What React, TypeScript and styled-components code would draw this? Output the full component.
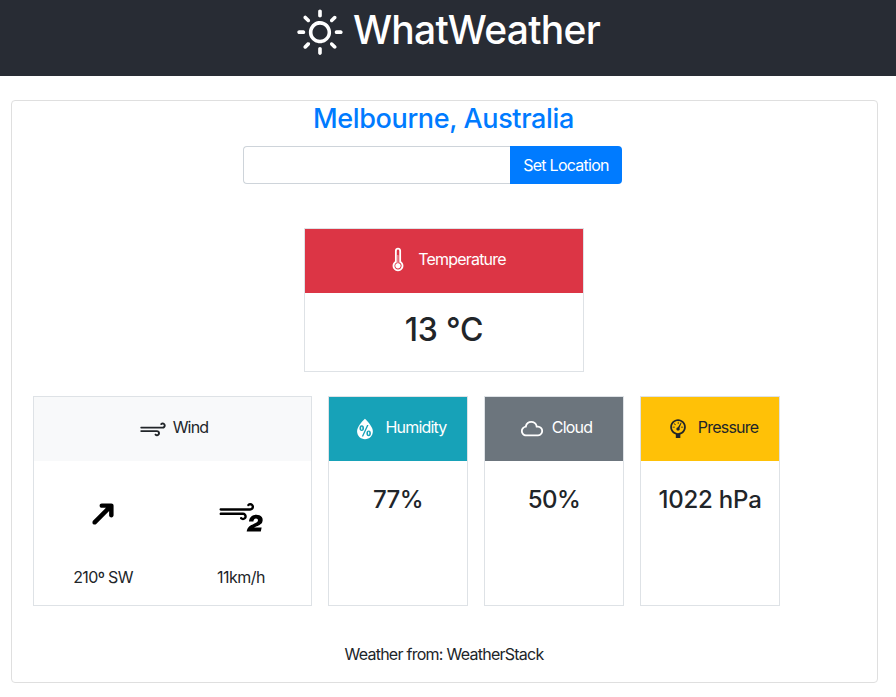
import React from "react";
import styled, { createGlobalStyle } from "styled-components";
import {
  WiBarometer,
  WiCloud,
  WiDaySunny,
  WiDirectionUpRight,
  WiHumidity,
  WiStrongWind,
  WiThermometer,
  WiWindBeaufort2,
} from "react-icons/wi";

const GlobalStyle = createGlobalStyle`
  *, *::before, *::after { box-sizing: border-box; }
  body {
    margin: 0;
    background: #fff;
    color: #212529;
    font: 400 16px/24px Inter, "Liberation Sans", sans-serif;
  }
  h1, h2, h3, h4, p { margin: 0; font-weight: 500; }
  svg { display: block; flex: none; }
`;

const Header = styled.header`
  display: flex;
  justify-content: center;
  height: 76px;
  padding-right: 8px;
  background: #282c34;
  color: #fff;
`;

const SunMark = styled(WiDaySunny)`
  margin-top: 1px;
`;

const Title = styled.h1`
  margin-left: 1px;
  font-size: 39px;
  line-height: 59px;
  letter-spacing: -0.72px;
`;

const Panel = styled.main`
  display: flex;
  flex-direction: column;
  width: 867px;
  height: 583px;
  margin: 24px 0 0 11px;
  border: 1px solid #dfdfdf;
  border-radius: 4px;
`;

const Place = styled.h3`
  padding: 1px 2px 0 0;
  color: #007bff;
  font-size: 27px;
  line-height: 34px;
  letter-spacing: -0.37px;
  text-align: center;
`;

const SearchForm = styled.form`
  display: flex;
  width: 379px;
  height: 38px;
  margin: 10px 0 0 231px;
`;

const LocationInput = styled.input`
  flex: 1;
  min-width: 0;
  padding: 6px 12px;
  border: 1px solid #ced4da;
  border-right: 0;
  border-radius: 4px 0 0 4px;
  font: inherit;
  outline: none;
`;

const SubmitButton = styled.button`
  width: 112px;
  padding: 0;
  border: 0;
  border-radius: 0 4px 4px 0;
  background: #007bff;
  color: #fff;
  font: inherit;
  letter-spacing: -0.73px;
`;

const Card = styled.section<{ $width: number; $height: number }>`
  width: ${(p) => p.$width}px;
  height: ${(p) => p.$height}px;
  border: 1px solid #dee2e6;
  background: #fff;
`;

const TemperatureRow = styled.div`
  margin: 44px 0 0 292px;
`;

const CardRow = styled.div`
  display: flex;
  gap: 16px;
  margin: 24px 0 0 21px;
`;

const CardHead = styled.header<{ $bg: string; $fg: string }>`
  display: flex;
  justify-content: center;
  gap: 4px;
  height: 64px;
  padding-top: 16px;
  background: ${(p) => p.$bg};
  color: ${(p) => p.$fg};
`;

const CardLabel = styled.span`
  margin-top: 2px;
  letter-spacing: -0.8px;
`;

const Temperature = styled.h2`
  padding-top: 17px;
  font-size: 32px;
  line-height: 40px;
  letter-spacing: -0.2px;
  text-align: center;
`;

const Reading = styled.h4<{ $spacing: number }>`
  padding-top: 24px;
  font-size: 24px;
  line-height: 29px;
  letter-spacing: ${(p) => p.$spacing}px;
  text-align: center;
`;

const WindBody = styled.div`
  display: grid;
  grid-template-columns: 138px 138px;
  padding-top: 24px;
`;

const WindItem = styled.div`
  display: flex;
  flex-direction: column;
  align-items: center;
  color: #000;
`;

const WindText = styled.span<{ $spacing: number }>`
  margin-top: 16px;
  color: #212529;
  letter-spacing: ${(p) => p.$spacing}px;
`;

const Credit = styled.footer`
  margin-top: 36px;
  padding-right: 1px;
  text-align: center;
  letter-spacing: -0.74px;
`;

const wind = [
  { text: "210º SW", spacing: -0.65, Icon: WiDirectionUpRight },
  { text: "11km/h", spacing: -0.5, Icon: WiWindBeaufort2 },
];

const metrics = [
  { label: "Humidity", value: "77%", spacing: -0.6, bg: "#17a2b8", fg: "#fff", Icon: WiHumidity },
  { label: "Cloud", value: "50%", spacing: -0.6, bg: "#6c757d", fg: "#fff", Icon: WiCloud },
  { label: "Pressure", value: "1022 hPa", spacing: -0.2, bg: "#ffc107", fg: "#212529", Icon: WiBarometer },
];

export default function App() {
  return (
    <>
      <GlobalStyle />
      <Header>
        <SunMark size={64} />
        <Title>WhatWeather</Title>
      </Header>
      <Panel>
        <Place>Melbourne, Australia</Place>
        <SearchForm onSubmit={(e) => e.preventDefault()}>
          <LocationInput aria-label="Location" />
          <SubmitButton type="submit">Set Location</SubmitButton>
        </SearchForm>
        <TemperatureRow>
          <Card $width={280} $height={144}>
            <CardHead $bg="#dc3545" $fg="#fff">
              <WiThermometer size={32} />
              <CardLabel>Temperature</CardLabel>
            </CardHead>
            <Temperature>13 °C</Temperature>
          </Card>
        </TemperatureRow>
        <CardRow>
          <Card $width={279} $height={210}>
            <CardHead $bg="#f8f9fa" $fg="#212529">
              <WiStrongWind size={32} />
              <CardLabel>Wind</CardLabel>
            </CardHead>
            <WindBody>
              {wind.map(({ text, spacing, Icon }) => (
                <WindItem key={text}>
                  <Icon size={64} />
                  <WindText $spacing={spacing}>{text}</WindText>
                </WindItem>
              ))}
            </WindBody>
          </Card>
          {metrics.map(({ label, value, spacing, bg, fg, Icon }) => (
            <Card key={label} $width={140} $height={210}>
              <CardHead $bg={bg} $fg={fg}>
                <Icon size={32} />
                <CardLabel>{label}</CardLabel>
              </CardHead>
              <Reading $spacing={spacing}>{value}</Reading>
            </Card>
          ))}
        </CardRow>
        <Credit>Weather from: WeatherStack</Credit>
      </Panel>
    </>
  );
}
